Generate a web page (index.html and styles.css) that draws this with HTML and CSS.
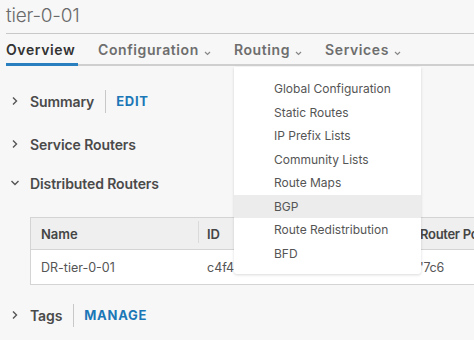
FILE: index.html
```html
<!DOCTYPE html>
<html>
<head>
<meta charset="utf-8">
<link rel="stylesheet" href="styles.css">
</head>
<body>
<div class="page">
  <div class="title">tier-0-01</div>
  <nav class="tabs">
    <div class="tab active">Overview</div>
    <div class="tab">Configuration<svg class="caret" width="7" height="5" viewBox="0 0 7 5"><path d="M1 1l2.5 2.5L6 1" fill="none" stroke="#888" stroke-width="1.2"/></svg></div>
    <div class="tab routing">Routing<svg class="caret" width="7" height="5" viewBox="0 0 7 5"><path d="M1 1l2.5 2.5L6 1" fill="none" stroke="#888" stroke-width="1.2"/></svg></div>
    <div class="tab">Services<svg class="caret" width="7" height="5" viewBox="0 0 7 5"><path d="M1 1l2.5 2.5L6 1" fill="none" stroke="#888" stroke-width="1.2"/></svg></div>
  </nav>
  <div class="content">
    <div class="section sec-summary">
      <svg class="chev" width="8" height="10" viewBox="0 0 8 10"><path d="M2 1.5l3.5 3.5L2 8.5" fill="none" stroke="#555" stroke-width="1.4"/></svg>
      <span class="sec-title">Summary</span>
      <span class="sep"></span>
      <span class="action">EDIT</span>
    </div>
    <div class="section sec-service">
      <svg class="chev" width="8" height="10" viewBox="0 0 8 10"><path d="M2 1.5l3.5 3.5L2 8.5" fill="none" stroke="#555" stroke-width="1.4"/></svg>
      <span class="sec-title">Service Routers</span>
    </div>
    <div class="section sec-dist">
      <svg class="chev" width="8" height="10" viewBox="0 0 8 10"><path d="M0.5 3l3.5 3.5L7.5 3" fill="none" stroke="#555" stroke-width="1.4"/></svg>
      <span class="sec-title">Distributed Routers</span>
    </div>
    <div class="table">
      <div class="row head">
        <div class="cell c1">Name</div>
        <div class="cell c2"><span class="colsep"></span>ID</div>
        <div class="cell c3">Router Po</div>
      </div>
      <div class="row body">
        <div class="cell c1">DR-tier-0-01</div>
        <div class="cell c2">c4f4</div>
        <div class="cell c3">'7c6</div>
      </div>
    </div>
    <div class="section sec-tags">
      <svg class="chev" width="8" height="10" viewBox="0 0 8 10"><path d="M2 1.5l3.5 3.5L2 8.5" fill="none" stroke="#555" stroke-width="1.4"/></svg>
      <span class="sec-title">Tags</span>
      <span class="sep"></span>
      <span class="action">MANAGE</span>
    </div>
  </div>
  <ul class="menu">
    <li>Global Configuration</li>
    <li>Static Routes</li>
    <li>IP Prefix Lists</li>
    <li>Community Lists</li>
    <li>Route Maps</li>
    <li class="hover">BGP</li>
    <li>Route Redistribution</li>
    <li>BFD</li>
  </ul>
</div>
</body>
</html>
```
FILE: styles.css
```css
html, body {
  margin: 0;
  padding: 0;
}
body {
  background: #f7f7f7;
  font-family: Inter, "Noto Sans", sans-serif;
  color: #444;
  width: 474px;
  height: 340px;
  overflow: hidden;
}
.page {
  position: relative;
  padding-left: 6px;
}
.title {
  height: 33px;
  border-bottom: 1px solid #c8c8c8;
  font-size: 19px;
  font-weight: 300;
  color: #6a6a6a;
  line-height: 31px;
  letter-spacing: -0.2px;
}
.tabs {
  display: flex;
  height: 30px;
  border-bottom: 2px solid #cfcfcf;
  align-items: stretch;
}
.tab {
  display: flex;
  align-items: center;
  font-size: 14px;
  font-weight: 600;
  letter-spacing: 0.6px;
  color: #6e6e6e;
  margin-right: 23px;
  border-bottom: 3px solid transparent;
  margin-bottom: -2px;
  padding-top: 1px;
}
.tab.active {
  color: #333;
  border-bottom-color: #2a7fbf;
  width: 72px;
  margin-right: 20px;
}
.caret {
  margin-left: 5px;
  margin-top: 8px;
}
.content {
  padding-left: 4px;
}
.section {
  display: flex;
  align-items: center;
  height: 24px;
}
.chev {
  width: 8px;
  margin-right: 11px;
  margin-left: 1px;
}
.sec-title {
  font-size: 14px;
  font-weight: 600;
  color: #4a4a4a;
  letter-spacing: -0.1px;
}
.sep {
  width: 1px;
  height: 23px;
  background: #c8c8c8;
  margin: 0 10px 0 11px;
}
.action {
  font-size: 13px;
  font-weight: 700;
  letter-spacing: 0.7px;
  color: #1c77b7;
}
.sec-summary { margin-top: 23px; }
.sec-service { margin-top: 19px; }
.sec-dist { margin-top: 15px; }
.table {
  margin-top: 22px;
  margin-left: 20px;
  width: 520px;
  border: 1px solid #d4d4d4;
  background: #fff;
}
.row {
  display: flex;
  align-items: center;
}
.row.head {
  height: 31px;
  background: #efefef;
  border-bottom: 1px solid #d4d4d4;
  font-weight: 600;
  font-size: 13px;
  color: #454545;
}
.row.body {
  height: 34px;
  font-size: 12.5px;
  color: #555;
}
.cell {
  position: relative;
}
.c1 { width: 157px; padding-left: 10px; }
.c2 { width: 211px; padding-left: 9px; }
.c3 { padding-left: 2px; letter-spacing: -0.3px; }
.colsep {
  position: absolute;
  left: 0;
  top: -5px;
  width: 1px;
  height: 22px;
  background: #dadada;
}
.sec-tags { margin-top: 18px; }
.menu {
  position: absolute;
  left: 234px;
  top: 67px;
  width: 187px;
  margin: 0;
  padding: 10px 0 0;
  height: 197px;
  list-style: none;
  background: #fff;
  box-shadow: 0 1px 3px rgba(0,0,0,0.15);
  border-radius: 0 0 3px 3px;
}
.menu li {
  height: 23.5px;
  line-height: 23.5px;
  padding-left: 40px;
  font-size: 12px;
  color: #555;
}
.menu li.hover {
  background: #ececec;
}
```
